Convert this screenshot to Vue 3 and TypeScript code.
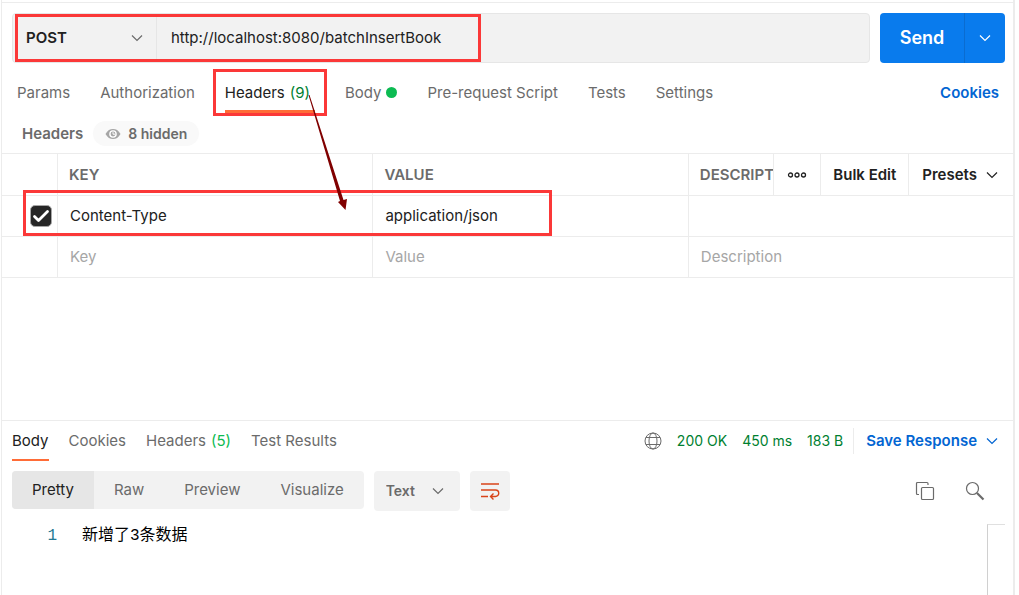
<script setup lang="ts">
import { ref } from 'vue'

interface Tab {
  label: string
  count?: number
  dot?: boolean
}

const method = ref('POST')
const url = ref('http://localhost:8080/batchInsertBook')
const requestTab = ref('Headers')
const responseTab = ref('Body')
const viewMode = ref('Pretty')
const format = ref('Text')

const requestTabs: Tab[] = [
  { label: 'Params' },
  { label: 'Authorization' },
  { label: 'Headers', count: 9 },
  { label: 'Body', dot: true },
  { label: 'Pre-request Script' },
  { label: 'Tests' },
  { label: 'Settings' },
]

const responseTabs: Tab[] = [
  { label: 'Body' },
  { label: 'Cookies' },
  { label: 'Headers', count: 5 },
  { label: 'Test Results' },
]

const viewModes = ['Pretty', 'Raw', 'Preview', 'Visualize']
const stats = ['200 OK', '450 ms', '183 B']

const header = ref({ enabled: true, key: 'Content-Type', value: 'application/json', description: '' })
const draft = ref({ key: '', value: '', description: '' })
</script>

<template>
  <main class="workspace">
    <section class="request">
      <form class="request-bar" @submit.prevent>
        <div class="address">
          <div class="picker method">
            <select v-model="method" aria-label="Method">
              <option>GET</option>
              <option>POST</option>
              <option>PUT</option>
              <option>DELETE</option>
            </select>
            <svg class="chevron" viewBox="0 0 12 8"><path d="M1 1.5l5 5 5-5" /></svg>
          </div>
          <input v-model="url" class="url" type="text" aria-label="Request URL" />
        </div>
        <div class="send">
          <button type="submit" class="send-main">Send</button>
          <button type="button" class="send-more" aria-label="Send options">
            <svg class="chevron" viewBox="0 0 12 8"><path d="M1 1.5l5 5 5-5" /></svg>
          </button>
        </div>
      </form>

      <nav class="tabs request-tabs">
        <button
          v-for="tab in requestTabs"
          :key="tab.label"
          type="button"
          class="tab"
          :class="{ active: tab.label === requestTab }"
          @click="requestTab = tab.label"
        >
          {{ tab.label }}
          <span v-if="tab.count" class="count dark">({{ tab.count }})</span>
          <span v-if="tab.dot" class="dot"></span>
        </button>
        <a class="cookies" href="#cookies">Cookies</a>
      </nav>

      <div class="subhead">
        <h2>Headers</h2>
        <button type="button" class="hidden-toggle">
          <svg class="eye" viewBox="0 0 16 12">
            <path class="lid" d="M0.500 6C2.500 2.300 5 1 8 1S13.500 2.300 15.500 6C13.500 9.700 11 11 8 11S2.500 9.700 0.500 6z" />
            <circle class="iris" cx="8" cy="6" r="3.800" />
            <circle class="pupil" cx="8" cy="6" r="2.400" />
            <path class="glint" d="M8 4.200V6.200H10" />
          </svg>
          8 hidden
        </button>
      </div>

      <table class="params">
        <colgroup>
          <col class="col-check" />
          <col class="col-field" />
          <col class="col-field" />
          <col />
        </colgroup>
        <thead>
          <tr>
            <th></th>
            <th>KEY</th>
            <th>VALUE</th>
            <th class="last">
              <div class="last-head">
                <span class="description">DESCRIPTION</span>
                <button type="button" class="action more" aria-label="More columns">
                  <svg viewBox="0 0 20 6">
                    <circle cx="3.500" cy="3" r="2" />
                    <circle cx="10" cy="3" r="2" />
                    <circle cx="16.500" cy="3" r="2" />
                  </svg>
                </button>
                <button type="button" class="action bulk">Bulk Edit</button>
                <button type="button" class="action presets">
                  Presets
                  <svg class="chevron" viewBox="0 0 12 8"><path d="M1 1.5l5 5 5-5" /></svg>
                </button>
              </div>
            </th>
          </tr>
        </thead>
        <tbody>
          <tr>
            <td class="check">
              <label>
                <input v-model="header.enabled" type="checkbox" aria-label="Enable Content-Type" />
                <svg viewBox="0 0 22 22"><path d="M4.500 11.500l4 4 9-9" /></svg>
              </label>
            </td>
            <td><input v-model="header.key" type="text" aria-label="Header key" /></td>
            <td><input v-model="header.value" type="text" aria-label="Header value" /></td>
            <td><input v-model="header.description" type="text" aria-label="Header description" /></td>
          </tr>
          <tr>
            <td></td>
            <td><input v-model="draft.key" type="text" placeholder="Key" aria-label="New key" /></td>
            <td><input v-model="draft.value" type="text" placeholder="Value" aria-label="New value" /></td>
            <td>
              <input v-model="draft.description" type="text" placeholder="Description" aria-label="New description" />
            </td>
          </tr>
        </tbody>
      </table>
    </section>

    <section class="response">
      <div class="response-head">
        <nav class="tabs response-tabs">
          <button
            v-for="tab in responseTabs"
            :key="tab.label"
            type="button"
            class="tab"
            :class="{ active: tab.label === responseTab }"
            @click="responseTab = tab.label"
          >
            {{ tab.label }}
            <span v-if="tab.count" class="count">({{ tab.count }})</span>
          </button>
        </nav>
        <div class="stats">
          <svg class="globe" viewBox="0 0 18 18">
            <circle cx="9" cy="9" r="8" />
            <ellipse cx="9" cy="9" rx="4" ry="8" />
            <path d="M2 5.500h14M2 12.500h14" />
          </svg>
          <span v-for="stat in stats" :key="stat">{{ stat }}</span>
        </div>
        <button type="button" class="save">
          Save Response
          <svg class="chevron" viewBox="0 0 12 8"><path d="M1 1.5l5 5 5-5" /></svg>
        </button>
      </div>

      <div class="tools">
        <div class="modes">
          <button
            v-for="mode in viewModes"
            :key="mode"
            type="button"
            :class="{ active: mode === viewMode }"
            @click="viewMode = mode"
          >
            {{ mode }}
          </button>
        </div>
        <div class="picker format">
          <select v-model="format" aria-label="Response format">
            <option>Text</option>
            <option>JSON</option>
            <option>HTML</option>
          </select>
          <svg class="chevron" viewBox="0 0 12 8"><path d="M1 1.5l5 5 5-5" /></svg>
        </div>
        <button type="button" class="wrap" aria-label="Wrap lines">
          <svg viewBox="0 0 20 18">
            <path d="M1 2h18M1 8h14.500a3.200 3.200 0 0 1 0 6.500H11M1 14.500h7M13.500 11.500l-3 3 3 3" />
          </svg>
        </button>
        <div class="tools-right">
          <button type="button" class="icon" aria-label="Copy">
            <svg viewBox="0 0 20 20">
              <path d="M4 13.500H2.500a1 1 0 0 1-1-1V2.500a1 1 0 0 1 1-1h9.500a1 1 0 0 1 1 1V4" />
              <rect x="6.500" y="6.500" width="12" height="12" rx="1" />
            </svg>
          </button>
          <button type="button" class="icon" aria-label="Search">
            <svg viewBox="0 0 20 20">
              <circle cx="7.500" cy="7.500" r="6" />
              <path d="M12 12l6.500 6.500" class="handle" />
            </svg>
          </button>
        </div>
      </div>

      <div class="editor">
        <span class="line-number">1</span>
        <code>新增了3条数据</code>
        <span class="ruler"></span>
      </div>
    </section>

    <div class="mark mark-url"></div>
    <div class="mark mark-tab"></div>
    <div class="mark mark-row"></div>
    <svg class="arrow" viewBox="0 0 40 120">
      <path d="M0.500 3L1.500 3 35.500 108 39 107 37.500 118 30 110 32 109z" />
    </svg>
  </main>
</template>

<style>
body {
  background: #fff;
}
</style>

<style scoped>
.workspace,
.workspace * {
  box-sizing: border-box;
}

.workspace {
  position: relative;
  display: flex;
  flex-direction: column;
  min-height: 100vh;
  margin: 0 4px 0 1px;
  padding-top: 2px;
  border-left: 1px solid #ececec;
  border-right: 2px solid #ececec;
  color: #212121;
  font-family: Inter, "Liberation Sans", sans-serif;
  font-size: 15px;
  line-height: 20px;
}

button,
input,
select {
  margin: 0;
  padding: 0;
  border: 0;
  border-radius: 0;
  outline: 0;
  background: none;
  color: inherit;
  font: inherit;
}

button {
  cursor: pointer;
  white-space: nowrap;
}

svg {
  display: block;
  flex: none;
  fill: none;
  stroke: currentColor;
}

.chevron {
  width: 12px;
  height: 8px;
  stroke-width: 1.2;
}

.request {
  flex: 1;
  border-top: 1px solid #ececec;
}

.request-bar {
  display: flex;
  gap: 10px;
  padding: 10px 8px 0 10px;
}

.address {
  display: flex;
  flex: 1;
  height: 50px;
  border: 1px solid #e6e6e6;
  border-radius: 4px;
  background: #f2f2f2;
}

.picker {
  position: relative;
  display: flex;
  align-items: center;
}

.picker select {
  width: 100%;
  height: 100%;
  appearance: none;
}

.picker .chevron {
  position: absolute;
  right: 13px;
  color: #6b6b6b;
  pointer-events: none;
}

.method {
  width: 144px;
  border-right: 1px solid #e6e6e6;
}

.method select {
  padding-left: 13px;
  font-weight: 600;
}

.url {
  flex: 1;
  min-width: 0;
  padding: 0 14px;
}

.send {
  display: flex;
  height: 50px;
  border-radius: 4px;
  overflow: hidden;
  background: #097bed;
  color: #fff;
}

.send-main {
  width: 84px;
  font-size: 18px;
  font-weight: 600;
}

.send-more {
  display: flex;
  align-items: center;
  justify-content: center;
  width: 41px;
  border-left: 1px solid #0a6cd0;
}

.tabs {
  display: flex;
}

.tab {
  display: flex;
  align-items: center;
  gap: 5px;
  padding-top: 2px;
  color: #6b6b6b;
}

.tab.active {
  color: #212121;
}

.count {
  color: #0cbb52;
}

.count.dark {
  margin-right: 5px;
  color: #007f31;
}

.dot {
  width: 11px;
  height: 11px;
  border-radius: 50%;
  background: #0cbb52;
}

.request-tabs {
  gap: 30px;
  height: 50px;
  padding: 10px 14px 0 15px;
}

.request-tabs .tab {
  height: 40px;
  border-bottom: 3px solid transparent;
}

.request-tabs .tab.active {
  border-bottom-color: #ff6c37;
}

.cookies {
  align-self: center;
  margin-left: auto;
  color: #0265d2;
  font-weight: 600;
  text-decoration: none;
}

.subhead {
  display: flex;
  align-items: center;
  gap: 10px;
  height: 40px;
  padding: 1px 20px 0;
  color: #6b6b6b;
}

.subhead h2 {
  margin: 0;
  font-size: 15px;
  font-weight: 600;
}

.hidden-toggle {
  display: flex;
  align-items: center;
  gap: 7px;
  height: 25px;
  padding: 0 12px;
  border-radius: 13px;
  background: #f9f9f9;
  font-size: 14px;
  font-weight: 600;
}

.eye {
  width: 16px;
  height: 12px;
  stroke: none;
}

.lid,
.pupil {
  fill: #a6a6a6;
}

.iris {
  fill: #fff;
}

.glint {
  stroke: #fff;
}

.params {
  width: 100%;
  border-collapse: separate;
  border-spacing: 0;
  border-top: 1px solid #ececec;
  table-layout: fixed;
}

.col-check {
  width: 56px;
}

.col-field {
  width: 31.2%;
}

.params th,
.params td {
  height: 41px;
  padding: 0;
  border-right: 1px solid #ececec;
  border-bottom: 1px solid #ececec;
}

.params th {
  height: 42px;
  padding-left: 11px;
  color: #6b6b6b;
  font-weight: 600;
  text-align: left;
}

.params th:last-child,
.params td:last-child {
  border-right: 0;
}

.params td {
  vertical-align: top;
}

.params td input[type='text'] {
  display: block;
  width: 100%;
  height: 38px;
  padding: 0 12px;
}

.params input::placeholder {
  color: #a6a6a6;
  opacity: 1;
}

.last-head {
  display: flex;
  align-items: center;
  height: 41px;
}

.description {
  flex: 1;
  min-width: 0;
  overflow: hidden;
}

.action {
  height: 41px;
  border-left: 1px solid #ececec;
  color: #212121;
  font-weight: 600;
}

.more {
  padding: 0 13px;
}

.more svg {
  width: 20px;
  height: 6px;
  stroke-width: 1.3;
}

.bulk {
  padding: 0 12px;
}

.presets {
  display: flex;
  align-items: center;
  gap: 9px;
  padding: 0 15px 0 13px;
}

.check label {
  position: relative;
  display: flex;
  align-items: center;
  justify-content: flex-end;
  height: 40px;
  padding-right: 5px;
}

.check input {
  width: 22px;
  height: 22px;
  border: 1px solid #a6a6a6;
  border-radius: 5px;
  appearance: none;
}

.check input:checked {
  background: #262626;
}

.check svg {
  position: absolute;
  right: 5px;
  width: 22px;
  height: 22px;
  color: #fff;
  stroke-width: 2.8;
  stroke-linecap: round;
  stroke-linejoin: round;
  pointer-events: none;
}

.response {
  display: flex;
  flex-direction: column;
  min-height: 175px;
  border-top: 1px solid #ececec;
}

.response-head {
  display: flex;
  align-items: center;
  height: 40px;
  padding: 0 15px 0 10px;
}

.response-tabs {
  gap: 20px;
  margin-right: auto;
}

.response-tabs .tab {
  height: 40px;
  border-bottom: 2px solid transparent;
}

.response-tabs .tab.active {
  border-bottom-color: #ff6c37;
}

.stats {
  display: flex;
  align-items: center;
  gap: 15px;
  margin-right: 10px;
  color: #007f31;
  font-size: 14px;
}

.globe {
  width: 18px;
  height: 18px;
  color: #6b6b6b;
}

.save {
  display: flex;
  align-items: center;
  gap: 9px;
  height: 26px;
  padding-left: 12px;
  border-left: 1px solid #ececec;
  color: #0265d2;
  font-weight: 600;
}

.tools {
  display: flex;
  align-items: flex-start;
  gap: 10px;
  padding: 10px 28px 0 10px;
}

.modes {
  display: flex;
  height: 38px;
  border-radius: 4px;
  overflow: hidden;
  background: #f2f2f2;
  color: #6b6b6b;
}

.modes button {
  padding: 0 20px;
}

.modes .active {
  background: #e6e6e6;
  color: #212121;
}

.format {
  width: 86px;
  height: 40px;
  border-radius: 4px;
  background: #f2f2f2;
  color: #6b6b6b;
}

.format select {
  padding-left: 12px;
  font-size: 14px;
  font-weight: 600;
}

.format .chevron {
  right: 16px;
}

.wrap {
  display: flex;
  align-items: center;
  justify-content: center;
  width: 40px;
  height: 40px;
  border-radius: 4px;
  background: #f2f2f2;
  color: #d9441a;
}

.wrap svg {
  width: 20px;
  height: 18px;
  stroke-width: 1.4;
}

.tools-right {
  display: flex;
  align-items: center;
  gap: 30px;
  height: 40px;
  margin-left: auto;
}

.icon {
  color: #6b6b6b;
}

.icon svg {
  width: 20px;
  height: 20px;
  stroke-width: 1.2;
}

.icon .handle {
  stroke-width: 2.2;
}

.editor {
  display: flex;
  flex: 1;
  padding: 13px 8px 0 0;
}

.line-number {
  width: 55px;
  padding-top: 2px;
  color: #237893;
  font-family: "Liberation Mono", monospace;
  font-size: 16px;
  text-align: right;
}

.editor code {
  flex: 1;
  padding: 2px 0 0 25px;
  color: #000;
  font-family: "Liberation Mono", "Noto Sans CJK SC", monospace;
  font-size: 16px;
}

.ruler {
  width: 18px;
  border-top: 1px solid #e0e0e0;
  border-left: 1px solid #d0d0d0;
}

.mark {
  position: absolute;
  border: 3px solid #fb3838;
  pointer-events: none;
}

.mark-url {
  top: 14px;
  left: 13px;
  width: 466px;
  height: 48px;
}

.mark-tab {
  top: 69px;
  left: 211px;
  width: 114px;
  height: 47px;
}

.mark-row {
  top: 190px;
  left: 21px;
  width: 529px;
  height: 46px;
}

.arrow {
  position: absolute;
  top: 92px;
  left: 306px;
  width: 40px;
  height: 120px;
  fill: #800000;
  stroke: none;
  pointer-events: none;
}
</style>
